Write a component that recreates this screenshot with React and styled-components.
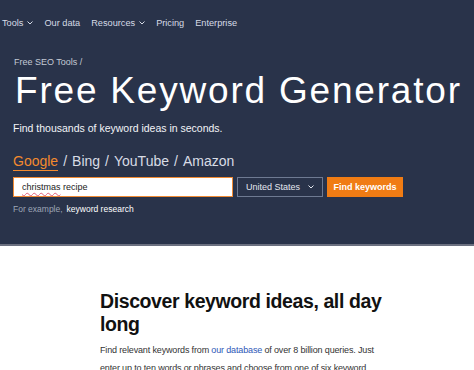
import React from "react";
import styled, { createGlobalStyle } from "styled-components";

const GlobalStyle = createGlobalStyle`
	body {
		margin: 0;
		font-family: "Liberation Sans", Arial, sans-serif;
		background: #fff;
	}
`;

const Hero = styled.section`
	background: #29334a;
	color: #fff;
	height: 246px;
	border-bottom: 2px solid #6b7080;
	box-sizing: border-box;
	padding: 0 13px;
`;

const Nav = styled.nav`
	display: flex;
	gap: 11px;
	height: 46px;
	align-items: center;
	margin-left: -11px;
	font-size: 9.2px;
	color: #d6dbe6;
`;

const NavItem = styled.span`
	display: inline-flex;
	align-items: center;
	gap: 4px;
`;

const Crumb = styled.div`
	font-size: 9px;
	color: #c4c9d4;
	margin-top: 11px;
	padding-left: 1px;
`;

const Title = styled.h1`
	margin: 2px 0 0;
	padding-left: 2px;
	font-size: 37px;
	font-weight: 400;
	letter-spacing: 1.8px;
	line-height: 44px;
	white-space: nowrap;
`;

const Lead = styled.p`
	margin: 9px 0 0;
	font-size: 10.5px;
	color: #f2f4f8;
`;

const Engines = styled.div`
	margin-top: 19px;
	font-size: 14px;
	color: #d8dce5;
	display: flex;
	gap: 5px;
`;

const Engine = styled.span`
	color: ${(p) => (p.$active ? "#f38a2e" : "#d8dce5")};
	border-bottom: ${(p) => (p.$active ? "1.5px solid #f38a2e" : "none")};
	padding-bottom: 1px;
`;

const SearchRow = styled.div`
	display: flex;
	gap: 4px;
	margin-top: 6px;
	height: 20px;
`;

const Input = styled.div`
	width: 220px;
	box-sizing: border-box;
	background: #fff;
	border: 1.5px solid #f08a33;
	color: #222;
	font-size: 9px;
	display: flex;
	align-items: center;
	padding-left: 8px;
`;

const Spell = styled.span`
	text-decoration: underline wavy #e0607a 0.5px;
	text-underline-offset: 2px;
`;

const Select = styled.div`
	width: 86px;
	box-sizing: border-box;
	border: 1px solid #6e7a92;
	color: #e4e8ef;
	font-size: 9px;
	display: flex;
	align-items: center;
	justify-content: space-between;
	padding: 0 8px;
`;

const Button = styled.div`
	width: 76px;
	background: #f07c14;
	color: #fff;
	font-weight: 700;
	font-size: 9px;
	display: flex;
	align-items: center;
	justify-content: center;
`;

const Example = styled.div`
	margin-top: 7px;
	font-size: 8.5px;
	color: #9ea6b6;
	b {
		color: #fff;
		font-weight: 400;
		margin-left: 4px;
	}
`;

const Content = styled.section`
	padding: 44px 0 0 100px;
	width: 290px;
`;

const Heading = styled.h2`
	margin: 0;
	font-size: 19.5px;
	letter-spacing: -0.4px;
	line-height: 23px;
	font-weight: 700;
	color: #111;
`;

const Body = styled.p`
	margin: 5px 0 0;
	font-size: 9px;
	letter-spacing: -0.15px;
	line-height: 18px;
	color: #333;
	a {
		color: #2d57b7;
		text-decoration: none;
	}
`;

const Chevron = ({ color = "currentColor" }) => (
	<svg width="6" height="4" viewBox="0 0 6 4">
		<path d="M0.5 0.5 L3 3 L5.5 0.5" fill="none" stroke={color} strokeWidth="1" />
	</svg>
);

export default function App() {
	return (
		<>
			<GlobalStyle />
			<Hero>
				<Nav>
					<NavItem>Tools <Chevron /></NavItem>
					<NavItem>Our data</NavItem>
					<NavItem>Resources <Chevron /></NavItem>
					<NavItem>Pricing</NavItem>
					<NavItem>Enterprise</NavItem>
				</Nav>
				<Crumb>Free SEO Tools /</Crumb>
				<Title>Free Keyword Generator</Title>
				<Lead>Find thousands of keyword ideas in seconds.</Lead>
				<Engines>
					<Engine $active>Google</Engine>/<Engine>Bing</Engine>/<Engine>YouTube</Engine>/<Engine>Amazon</Engine>
				</Engines>
				<SearchRow>
					<Input>
						<Spell>christmas</Spell>&nbsp;recipe
					</Input>
					<Select>
						United States <Chevron />
					</Select>
					<Button>Find keywords</Button>
				</SearchRow>
				<Example>
					For example,<b>keyword research</b>
				</Example>
			</Hero>
			<Content>
				<Heading>Discover keyword ideas, all day long</Heading>
				<Body>
					Find relevant keywords from <a>our database</a> of over 8 billion queries. Just enter up to ten words or phrases and choose from one of six keyword
				</Body>
			</Content>
		</>
	);
}
